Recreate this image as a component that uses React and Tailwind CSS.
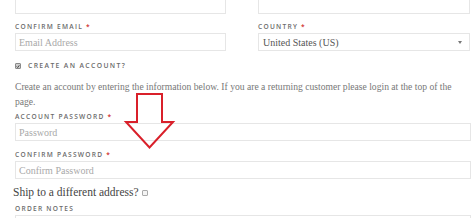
import React from "react";

const serif = { fontFamily: '"Liberation Serif", "DejaVu Serif", serif' };
const sans = { fontFamily: '"Open Sans", "Liberation Sans", sans-serif', fontWeight: 600 };

function Label({ children, className = "", required = true }) {
  return (
    <div
      className={"flex items-center h-[10px] text-[6.6px] tracking-[0.19em] text-[#6b6b6b] uppercase " + className}
      style={sans}
    >
      {children}
      {required && <span className="ml-[3px] text-[#d0302f]">*</span>}
    </div>
  );
}

function Input({ placeholder, className = "" }) {
  return (
    <div
      className={"h-[18px] border border-[#e6e6e6] bg-white flex items-center px-[3px] text-[10px] text-[#a9a9a9] " + className}
      style={serif}
    >
      {placeholder}
    </div>
  );
}

export default function App() {
  return (
    <div className="w-[474px] h-[218px] bg-white overflow-hidden relative">
      <div className="pl-[15px] w-[471px] -mt-[4px]">
        <div className="grid grid-cols-[211px_212px] gap-x-[32px]">
          <Input />
          <Input />
        </div>
        <div className="grid grid-cols-[211px_212px] gap-x-[32px] mt-[8px]">
          <div>
            <Label>Confirm Email</Label>
            <Input placeholder="Email Address" className="mt-[1px]" />
          </div>
          <div>
            <Label>Country</Label>
            <div
              className="mt-[1px] h-[18px] border border-[#e6e6e6] bg-white flex items-center justify-between pl-[4px] pr-[7px] text-[10px] text-[#555]"
              style={serif}
            >
              <span>United States (US)</span>
              <span className="w-0 h-0 border-l-[2.5px] border-r-[2.5px] border-t-[3px] border-l-transparent border-r-transparent border-t-[#777]" />
            </div>
          </div>
        </div>
        <div className="flex items-center mt-[10px] h-[10px]">
          <span className="w-[6px] h-[6px] rounded-[1px] bg-[#cfcfcf] border border-[#8a8a8a] flex items-center justify-center">
            <svg width="5" height="5" viewBox="0 0 6 6">
              <path d="M1 3 L2.5 4.5 L5 1.2" stroke="#222" strokeWidth="1.2" fill="none" />
            </svg>
          </span>
          <span className="ml-[7px] text-[6.8px] tracking-[0.2em] text-[#6b6b6b] uppercase" style={sans}>
            Create an account?
          </span>
        </div>
        <p className="mt-[8px] text-[9.6px] leading-[15px] text-[#777] pr-[4px]" style={serif}>
          Create an account by entering the information below. If you are a returning customer please login at the top of the page.
        </p>
        <Label className="mt-[3px]">Account Password</Label>
        <Input placeholder="Password" className="mt-[1px]" />
        <Label className="mt-[9px]">Confirm Password</Label>
        <Input placeholder="Confirm Password" className="mt-[1px]" />
        <div className="flex items-center -ml-[2px] mt-[6px] h-[16px] text-[11.5px] text-[#444]" style={serif}>
          Ship to a different address?
          <span className="ml-[3px] w-[6px] h-[6px] border border-[#aaa] rounded-[1px] bg-[#f4f4f4]" />
        </div>
        <Label className="mt-[3px]" required={false}>Order Notes</Label>
        <Input className="mt-[1px] h-[30px]" />
      </div>
      <svg className="absolute left-0 top-0 pointer-events-none" width="474" height="218">
        <path
          d="M137 94 L162 94 L162 122 L173 122 L149.5 147.5 L126 122 L137 122 Z"
          fill="none"
          stroke="#d9202a"
          strokeWidth="2"
          strokeLinejoin="miter"
        />
      </svg>
    </div>
  );
}
